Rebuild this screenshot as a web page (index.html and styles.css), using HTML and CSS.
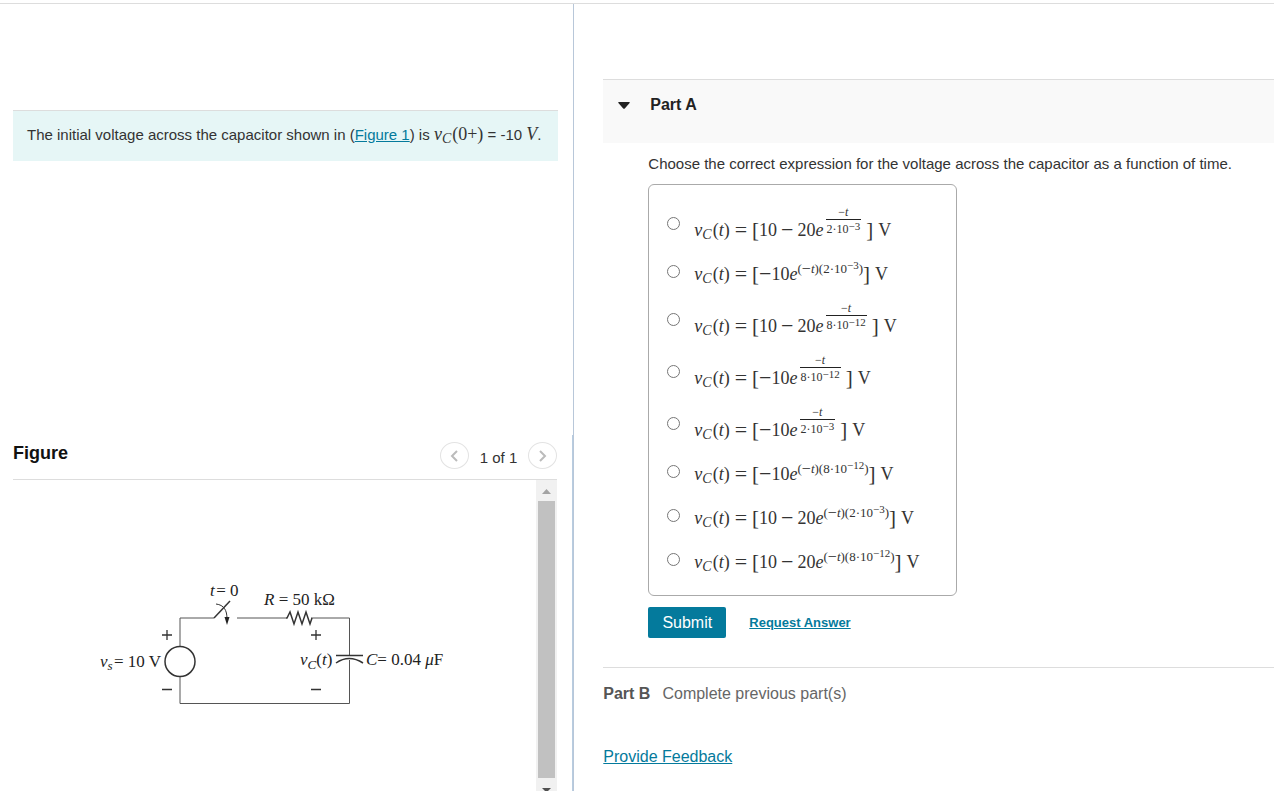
FILE: index.html
```
<!DOCTYPE html>
<html lang="en">
<head>
<meta charset="utf-8">
<title>Capacitor voltage</title>
<link rel="stylesheet" href="styles.css">
</head>
<body>
<div class="page">
  <aside class="left">
    <section class="problem">
      <p class="intro">The initial voltage across the capacitor shown in (<a href="#figure">Figure 1</a>) is <span class="math"><i>v</i><i class="sub">C</i>(0+)</span> = -10 <i class="unit">V</i>.</p>
    </section>
    <section class="figure" id="figure">
      <header class="figure-head">
        <h2>Figure</h2>
        <nav class="pager">
          <button class="round" type="button" aria-label="Previous figure"><svg width="10" height="14" viewBox="0 0 10 14"><path d="M8 2 3 7l5 5"/></svg></button>
          <span>1 of 1</span>
          <button class="round" type="button" aria-label="Next figure"><svg width="10" height="14" viewBox="0 0 10 14"><path d="m2 2 5 5-5 5"/></svg></button>
        </nav>
      </header>
      <div class="figure-body">
        <div class="canvas">
          <svg class="circuit" width="370" height="150" viewBox="0 0 370 150">
            <g class="wire">
              <path d="M90 76V48H124M147 48H196M221 48H259.500V85M259.500 90V133.500H90V107"/>
            </g>
            <g class="part">
              <path d="M124 48 140 31"/>
              <path class="thin" d="M126 34C134 35 137 40 137 49"/>
              <path d="M196 48h1l3-6 4 12 4-12 4 12 4-12 4 12 2-6"/>
              <path d="M246 85.500H273M246 93Q259 84 273 93"/>
              <circle cx="90" cy="91.500" r="15"/>
            </g>
            <path class="head" d="M134.500 47h5L137 55z"/>
            <g class="labels">
              <text x="120" y="26"><tspan class="it">t</tspan>&#8202;= 0</text>
              <text x="174" y="35"><tspan class="it">R</tspan> = 50 kΩ</text>
              <text x="10" y="97"><tspan class="it">v</tspan><tspan class="it small" dy="3">s</tspan><tspan dy="-3">&#8202;= 10 V</tspan></text>
              <text x="210" y="95"><tspan class="it">v</tspan><tspan class="it small" dy="4">C</tspan><tspan dy="-4">(</tspan><tspan class="it">t</tspan>)</text>
              <text x="276" y="95"><tspan class="it">C</tspan>= 0.04 <tspan class="it">μ</tspan>F</text>
            </g>
            <path class="sign" d="M72 65h10M77 60v10M72 119.500h10M221 65h10M226 60v10M221 119.500h10"/>
          </svg>
        </div>
        <div class="scrollbar" aria-hidden="true">
          <svg width="9" height="5" viewBox="0 0 9 5"><path d="M4.500 0 9 5H0z" fill="#a3a3a3"/></svg>
          <div class="thumb"></div>
          <svg width="9" height="3" viewBox="0 0 9 3"><path d="M0 0h9L6 3H3z" fill="#505050"/></svg>
        </div>
      </div>
    </section>
  </aside>

  <main class="right">
    <header class="part-head">
      <button class="toggle" type="button" aria-label="Collapse Part A"><svg width="12" height="7" viewBox="0 0 12 7"><path d="M1 0h10q1.500 0 .6 1L7 6.200q-1 1-2 0L.4 1Q-.5 0 1 0z" fill="#222"/></svg></button>
      <h2>Part A</h2>
    </header>
    <form class="question">
      <p class="prompt" id="prompt">Choose the correct expression for the voltage across the capacitor as a function of time.</p>
      <div class="choices" role="radiogroup" aria-labelledby="prompt">
        <label class="choice tall"><input type="radio" name="answer"><span class="math"><i>v</i><i class="sub">C</i>(<i>t</i>)<span class="op rel">=</span><span class="br">[</span>10<span class="op bin">−</span>20<i>e</i><span class="frac"><span class="num">−<i>t</i></span><span class="den">2·10<span class="exp">−3</span></span></span><span class="br">]</span><span class="volt">V</span></span></label>
        <label class="choice"><input type="radio" name="answer"><span class="math"><i>v</i><i class="sub">C</i>(<i>t</i>)<span class="op rel">=</span><span class="br">[</span><span class="op">−</span>10<i>e</i><span class="sup">(<span class="op">−</span><i>t</i>)(2·10<span class="exp">−3</span>)</span><span class="br">]</span><span class="volt">V</span></span></label>
        <label class="choice tall"><input type="radio" name="answer"><span class="math"><i>v</i><i class="sub">C</i>(<i>t</i>)<span class="op rel">=</span><span class="br">[</span>10<span class="op bin">−</span>20<i>e</i><span class="frac"><span class="num">−<i>t</i></span><span class="den">8·10<span class="exp">−12</span></span></span><span class="br">]</span><span class="volt">V</span></span></label>
        <label class="choice tall"><input type="radio" name="answer"><span class="math"><i>v</i><i class="sub">C</i>(<i>t</i>)<span class="op rel">=</span><span class="br">[</span><span class="op">−</span>10<i>e</i><span class="frac"><span class="num">−<i>t</i></span><span class="den">8·10<span class="exp">−12</span></span></span><span class="br">]</span><span class="volt">V</span></span></label>
        <label class="choice tall"><input type="radio" name="answer"><span class="math"><i>v</i><i class="sub">C</i>(<i>t</i>)<span class="op rel">=</span><span class="br">[</span><span class="op">−</span>10<i>e</i><span class="frac"><span class="num">−<i>t</i></span><span class="den">2·10<span class="exp">−3</span></span></span><span class="br">]</span><span class="volt">V</span></span></label>
        <label class="choice"><input type="radio" name="answer"><span class="math"><i>v</i><i class="sub">C</i>(<i>t</i>)<span class="op rel">=</span><span class="br">[</span><span class="op">−</span>10<i>e</i><span class="sup">(<span class="op">−</span><i>t</i>)(8·10<span class="exp">−12</span>)</span><span class="br">]</span><span class="volt">V</span></span></label>
        <label class="choice"><input type="radio" name="answer"><span class="math"><i>v</i><i class="sub">C</i>(<i>t</i>)<span class="op rel">=</span><span class="br">[</span>10<span class="op bin">−</span>20<i>e</i><span class="sup">(<span class="op">−</span><i>t</i>)(2·10<span class="exp">−3</span>)</span><span class="br">]</span><span class="volt">V</span></span></label>
        <label class="choice"><input type="radio" name="answer"><span class="math"><i>v</i><i class="sub">C</i>(<i>t</i>)<span class="op rel">=</span><span class="br">[</span>10<span class="op bin">−</span>20<i>e</i><span class="sup">(<span class="op">−</span><i>t</i>)(8·10<span class="exp">−12</span>)</span><span class="br">]</span><span class="volt">V</span></span></label>
      </div>
      <div class="actions">
        <button class="submit" type="button">Submit</button>
        <a class="request" href="#answer">Request Answer</a>
      </div>
    </form>
    <section class="part-b"><h2>Part B</h2><p>Complete previous part(s)</p></section>
    <a class="feedback" href="#feedback">Provide Feedback</a>
  </main>
</div>
</body>
</html>
```
FILE: styles.css
```
* { box-sizing: border-box; }
body {
  margin: 0;
  padding-top: 3px;
  font-family: "Liberation Sans", Arial, sans-serif;
  font-size: 15px;
  color: #333;
  background: #fff;
}
h2, p { margin: 0; }
a { color: #047a9c; }
button { font-family: inherit; cursor: pointer; }
.page {
  display: grid;
  grid-template-columns: 45% 1fr;
  min-height: calc(100vh - 3px);
  border-top: 1px solid #ddd;
}

/* left column */
.left { display: flex; flex-direction: column; }
.problem { height: 431px; padding: 106px 15px 0 13px; }
.intro {
  padding: 11px 14px 13px;
  line-height: 26px;
  background: #e6f6f6;
  border-top: 1px solid #ddd;
}
.unit { font-family: "Liberation Serif", serif; font-size: 18px; line-height: 20px; }
.figure {
  flex: 1;
  display: flex;
  flex-direction: column;
  padding: 0 15px 0 13px;
  border-right: 1px solid #b8cce0;
}
.figure-head {
  display: flex;
  justify-content: space-between;
  height: 45px;
  padding-top: 7px;
  border-bottom: 1px solid #ddd;
}
.figure-head h2 { font-size: 18px; line-height: 22px; color: #111; }
.pager { display: flex; gap: 11px; }
.pager span { line-height: 31px; }
.round {
  display: grid;
  place-items: center;
  width: 29px;
  height: 27px;
  padding: 0;
  background: #fff;
  border: 1px solid #e3e3e3;
  border-radius: 50%;
}
.round path { fill: none; stroke: #bbb; stroke-width: 2; }
.figure-body { flex: 1; display: flex; }
.canvas { flex: 1; padding: 90px 0 0 77px; }
.circuit { display: block; }
.wire { fill: none; stroke: #555; stroke-width: 1; }
.part { fill: none; stroke: #333; stroke-width: 1.5; }
.part .thin { stroke-width: 1; }
.head { fill: #222; }
.sign { stroke: #333; stroke-width: 1.3; }
.labels { font-family: "Liberation Serif", serif; font-size: 17px; fill: #222; }
.it { font-style: italic; }
.small { font-size: 13px; }
.scrollbar {
  display: flex;
  flex-direction: column;
  align-items: center;
  width: 21px;
  padding-top: 9px;
  background: #f1f1f1;
}
.scrollbar svg { display: block; flex: none; }
.thumb { flex: 1; width: 17px; margin: 7px 0 10px; background: #c1c1c1; }

/* right column */
.right { padding: 75px 0 0 29px; border-left: 1px solid #b8c7d9; }
.part-head {
  display: flex;
  align-items: flex-start;
  gap: 20px;
  height: 64px;
  padding: 15px 15px 0;
  background: #f9f9f9;
  border-top: 1px solid #ddd;
}
.toggle {
  display: grid;
  place-items: center;
  width: 12px;
  height: 20px;
  padding: 0;
  background: none;
  border: 0;
}
.part-head h2 { font-size: 16px; line-height: 20px; color: #222; }
.question { padding-left: 45px; }
.prompt { padding: 12px 0 11px; line-height: 18px; }
.choices {
  width: 309px;
  padding: 12px 18px 14px;
  border: 1px solid #aaa;
  border-radius: 6px;
}
.choice { display: flex; align-items: center; gap: 14px; height: 44px; }
.choice.tall { height: 52px; }
.choice input {
  appearance: none;
  flex: none;
  width: 13px;
  height: 13px;
  margin: 0;
  background: #fff;
  border: 1px solid #767676;
  border-radius: 50%;
}
.choice input:checked { background: #047a9c; }
.choice .math { padding-top: 6px; }
.choice.tall .math { padding-top: 0; }
.math {
  font-family: "Liberation Serif", "Times New Roman", serif;
  font-size: 18px;
  line-height: 22px;
  white-space: nowrap;
}
.sub { font-size: 14px; line-height: 0; vertical-align: -3px; margin-right: 1px; }
.op { font-size: 22px; line-height: 0; vertical-align: -1px; }
.rel { margin: 0 5px; }
.bin { margin: 0 4px; }
.br { font-size: 21px; line-height: 0; vertical-align: -1px; }
.sup { font-size: 13px; line-height: 0; vertical-align: 7px; }
.sup .op { font-size: 16px; }
.exp { font-size: 11px; line-height: 0; vertical-align: 4px; }
.frac {
  display: inline-flex;
  flex-direction: column;
  align-items: center;
  margin: 0 5px 0 2px;
  font-size: 12px;
  line-height: 12px;
  vertical-align: 20px;
}
.num { padding-bottom: 1px; }
.den { padding: 3px 1px 0; border-top: 1px solid #222; }
.frac .exp { vertical-align: 3px; }
.volt { margin-left: 5px; }
.actions { display: flex; align-items: center; gap: 23px; padding-top: 11px; }
.submit {
  width: 78px;
  height: 31px;
  padding: 0;
  font-size: 16px;
  color: #fff;
  background: #047a9c;
  border: 0;
  border-radius: 2px;
}
.request { font-size: 13px; font-weight: bold; }
.part-b {
  display: flex;
  gap: 12px;
  margin-top: 29px;
  padding-top: 16px;
  font-size: 16px;
  line-height: 20px;
  color: #666;
  border-top: 1px solid #ddd;
}
.part-b h2 { font-size: 16px; color: #555; }
.feedback { display: inline-block; margin-top: 43px; font-size: 16px; line-height: 20px; }
```
